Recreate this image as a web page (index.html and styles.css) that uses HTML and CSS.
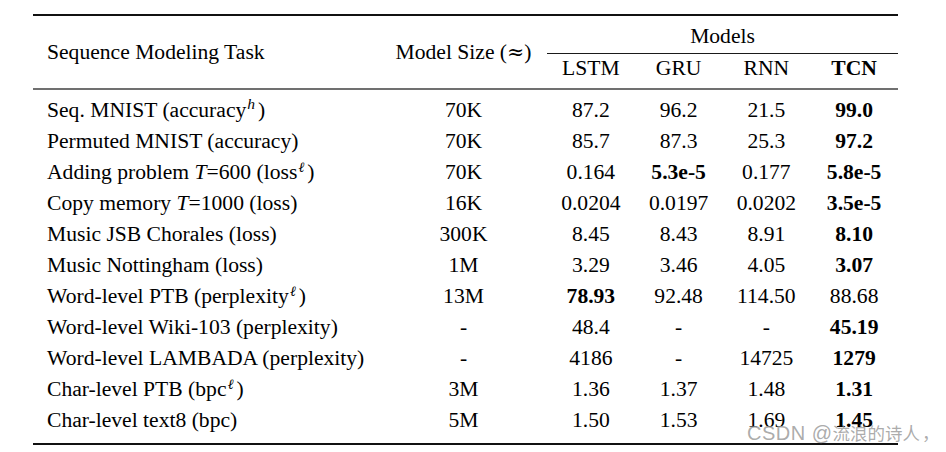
FILE: index.html
```html
<!DOCTYPE html>
<html>
<head>
<meta charset="utf-8">
<link rel="stylesheet" href="styles.css">
</head>
<body>
<div class="page">
<table class="results">
  <colgroup>
    <col class="c-task"><col class="c-size"><col class="c-m"><col class="c-m"><col class="c-m"><col class="c-m">
  </colgroup>
  <thead>
    <tr>
      <th class="task head-span" rowspan="2">Sequence Modeling Task</th>
      <th class="head-span" rowspan="2">Model Size (<span class="math">≈</span>)</th>
      <th class="models" colspan="4">Models</th>
    </tr>
    <tr class="sub">
      <th>LSTM</th><th>GRU</th><th>RNN</th><th><b>TCN</b></th>
    </tr>
  </thead>
  <tbody>
    <tr><td class="task">Seq. MNIST (accuracy<sup><i>h</i></sup>)</td><td>70K</td><td>87.2</td><td>96.2</td><td>21.5</td><td><b>99.0</b></td></tr>
    <tr><td class="task">Permuted MNIST (accuracy)</td><td>70K</td><td>85.7</td><td>87.3</td><td>25.3</td><td><b>97.2</b></td></tr>
    <tr><td class="task">Adding problem <i>T</i>=600 (loss<sup class="ell">ℓ</sup>)</td><td>70K</td><td>0.164</td><td><b>5.3e-5</b></td><td>0.177</td><td><b>5.8e-5</b></td></tr>
    <tr><td class="task">Copy memory <i>T</i>=1000 (loss)</td><td>16K</td><td>0.0204</td><td>0.0197</td><td>0.0202</td><td><b>3.5e-5</b></td></tr>
    <tr><td class="task">Music JSB Chorales (loss)</td><td>300K</td><td>8.45</td><td>8.43</td><td>8.91</td><td><b>8.10</b></td></tr>
    <tr><td class="task">Music Nottingham (loss)</td><td>1M</td><td>3.29</td><td>3.46</td><td>4.05</td><td><b>3.07</b></td></tr>
    <tr><td class="task">Word-level PTB (perplexity<sup class="ell">ℓ</sup>)</td><td>13M</td><td><b>78.93</b></td><td>92.48</td><td>114.50</td><td>88.68</td></tr>
    <tr><td class="task">Word-level Wiki-103 (perplexity)</td><td>-</td><td>48.4</td><td>-</td><td>-</td><td><b>45.19</b></td></tr>
    <tr><td class="task">Word-level LAMBADA (perplexity)</td><td>-</td><td>4186</td><td>-</td><td>14725</td><td><b>1279</b></td></tr>
    <tr><td class="task">Char-level PTB (bpc<sup class="ell">ℓ</sup>)</td><td>3M</td><td>1.36</td><td>1.37</td><td>1.48</td><td><b>1.31</b></td></tr>
    <tr><td class="task">Char-level text8 (bpc)</td><td>5M</td><td>1.50</td><td>1.53</td><td>1.69</td><td><b>1.45</b></td></tr>
  </tbody>
</table>
<div class="watermark"><span class="wm-latin">CSDN @</span><span class="wm-cjk">流浪的诗人</span><span class="wm-comma">，</span></div>
</div>
</body>
</html>
```

FILE: styles.css
```css
html, body {
  margin: 0;
  padding: 0;
  background: #ffffff;
}

.page {
  position: relative;
  width: 946px;
  height: 452px;
  padding-top: 14px;
  box-sizing: border-box;
}

.results {
  margin-left: 33px;
  width: 865px;
  table-layout: fixed;
  border-collapse: separate;
  border-spacing: 0;
  border-top: 2px solid #111111;
  border-bottom: 2px solid #111111;
  font-family: "Liberation Serif", "Times New Roman", serif;
  font-size: 21.6px;
  color: #000000;
}

.c-task { width: 347px; }
.c-size { width: 167px; }
.c-m { width: 87.75px; }

.results th {
  font-weight: normal;
  text-align: center;
  line-height: 26px;
  padding: 0;
  white-space: nowrap;
}

.results th.task,
.results td.task {
  text-align: left;
  padding-left: 14px;
}

.head-span {
  vertical-align: middle;
  border-bottom: 2px solid #707070;
}

.math {
  font-family: "DejaVu Serif", serif;
  font-size: 0.95em;
}

.results th.models {
  padding: 7px 0 4px;
  border-bottom: 1px solid #1a1a1a;
}

.sub th {
  padding: 1px 0 7px;
  border-bottom: 2px solid #707070;
}

.results td {
  text-align: center;
  line-height: 31px;
  padding: 0;
  white-space: nowrap;
}

.results tbody tr:first-child td { padding-top: 5px; }
.results tbody tr:last-child td { padding-bottom: 7px; }

.results b { font-weight: bold; }

.results sup {
  font-size: 0.72em;
  line-height: 0;
  vertical-align: 0.5em;
  padding-left: 1px;
  padding-right: 3px;
}

.results sup.ell {
  font-family: "DejaVu Serif", serif;
  font-style: italic;
  font-size: 0.66em;
}

.watermark {
  position: absolute;
  left: 747px;
  top: 421px;
  line-height: 24px;
  color: rgba(150, 150, 150, 0.8);
  white-space: nowrap;
  display: flex;
  align-items: baseline;
}

.wm-latin {
  font-family: "Liberation Sans", Arial, sans-serif;
  font-size: 20px;
  letter-spacing: 0.5px;
}

.wm-cjk,
.wm-comma {
  font-family: "Noto Sans CJK SC", sans-serif;
  font-size: 17.5px;
}

.wm-comma {
  padding-left: 2px;
}
```
